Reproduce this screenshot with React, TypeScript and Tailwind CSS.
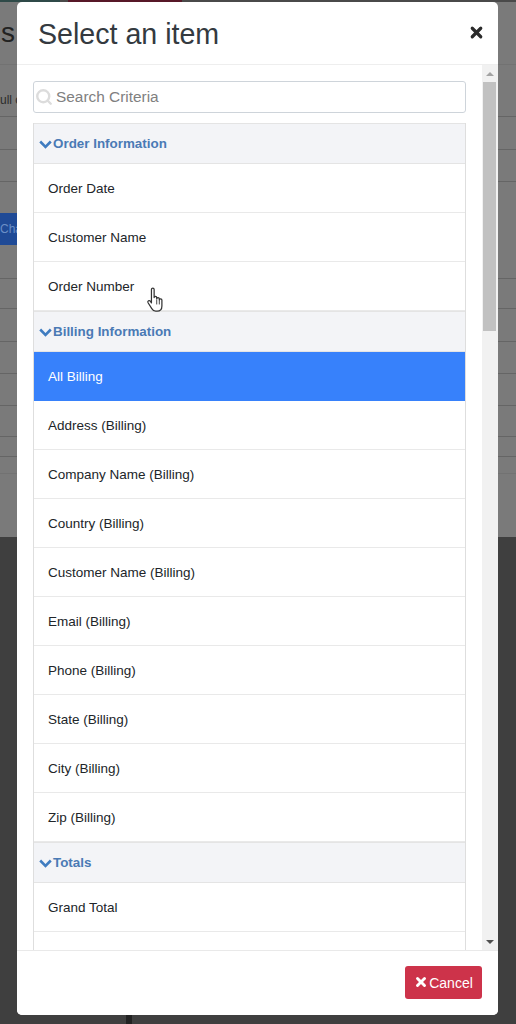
import type { ReactNode } from "react";
import { Search, X } from "lucide-react";

function Item({ label, active }: { label?: string; active?: boolean }) {
  return (
    <div
      className={
        active
          ? "h-[49px] flex items-center pl-[14px] pt-[1px] text-[13.5px] bg-[#3781fb] text-white"
          : "h-[49px] flex items-center pl-[14px] pt-[2px] text-[13.5px] text-[#212529] bg-white border-b border-[#e9e9e9]"
      }
    >
      {label}
    </div>
  );
}

function Group({ label }: { label: string }) {
  return (
    <div className="h-[41px] flex items-center pl-[5px] pt-[2px] bg-[#f3f4f7] border-y border-[#e4e4e4] text-[13.4px] font-bold text-[#4a7ab5]">
      <svg className="shrink-0 mr-px" width="13" height="9" viewBox="0 0 13 9" fill="none">
        <path d="M1.200 1.500 L6.500 6.800 L11.800 1.500" stroke="#3f7cc0" strokeWidth="2.600" />
      </svg>
      <span>{label}</span>
    </div>
  );
}

function BgRow({ h, faint, children }: { h: string; faint?: boolean; children?: ReactNode }) {
  return (
    <div
      className={
        faint
          ? `${h} border-b border-[#727272] text-[#2b2b2b] text-[12px]`
          : `${h} border-b border-[#656565] text-[#2b2b2b] text-[12px]`
      }
    >
      {children}
    </div>
  );
}

export default function App() {
  return (
    <div className="relative w-[516px] h-[1024px] overflow-hidden bg-[#3f3f3f] font-['Liberation_Sans',Arial,sans-serif] flex flex-col">
      <div className="h-[537px] shrink-0 bg-[#7a7a7a] flex flex-col">
        <div className="h-[2px] shrink-0 flex bg-[#4a4a4a]">
          <div className="w-[60px] bg-[#2f4a48]" />
          <div className="w-[8px]" />
          <div className="w-[114px] bg-[#571828]" />
        </div>
        <BgRow h="h-[63px]" faint>
          <div className="pl-px text-[28px] leading-[62px] text-[#222]">s</div>
        </BgRow>
        <BgRow h="h-[52px]">
          <div className="pt-[28px] leading-[14px] whitespace-nowrap">ull c</div>
        </BgRow>
        <BgRow h="h-[33px]" />
        <BgRow h="h-[32px]" />
        <BgRow h="h-[97px]">
          <div className="mt-[31px] h-[32px] w-[30px] bg-[#1f4a96] text-[#6b8fc6] leading-[32px] whitespace-nowrap">Cha</div>
        </BgRow>
        <BgRow h="h-[30px]" />
        <BgRow h="h-[33px]" />
        <BgRow h="h-[32px]" />
        <BgRow h="h-[32px]" />
        <BgRow h="h-[31px]" />
        <BgRow h="h-[20px]" />
        <BgRow h="h-[17px]" faint />
      </div>
      <div className="flex-1 pl-[126px]">
        <div className="w-[6px] h-full bg-[#222222]" />
      </div>

      <div className="absolute left-[17px] top-[2px] w-[481px] h-[1013px] bg-white rounded-[5px] flex flex-col overflow-hidden">
        <div className="h-[63px] shrink-0 flex items-center justify-between pl-[21px] pr-[13px] border-b border-[#eeeeee]">
          <span className="text-[28.6px] pt-[2px] text-[#343a40]">Select an item</span>
          <X className="w-[17px] h-[17px] -mt-[2px] text-[#2b2b2b]" strokeWidth={4.5} />
        </div>

        <div className="flex-1 min-h-0 flex">
          <div className="flex-1 min-w-0 pl-[16px] pr-[16px] pt-[16px] overflow-hidden">
            <div className="relative h-[32px] mb-[10px] border border-[#ced4da] rounded-[3px] flex items-center pl-[22px] text-[15.4px] text-[#808080]">
              <Search className="absolute left-[1px] top-[6px] w-[18px] h-[18px] text-[#dcdcdc]" strokeWidth={3.200} />
              Search Criteria
            </div>
            <div className="border-x border-[#dedede]">
              <Group label="Order Information" />
              <Item label="Order Date" />
              <Item label="Customer Name" />
              <div className="relative">
                <Item label="Order Number" />
                <svg className="absolute left-[112px] top-[25px]" width="21" height="27" viewBox="0 0 18 24">
                  <path
                    d="M4.500 2.200c0-1.500 2.400-1.500 2.400 0v7.200c0-1.300 2.300-1.300 2.300 0v1c0-1.200 2.300-1.200 2.300 0v1c0-1.100 2.300-1.100 2.300.2v5.200c0 2.600-1.600 4.600-4.300 4.600H8.300c-1.800 0-2.600-.7-3.500-2.200L1.500 14c-.8-1.500 1-2.600 2-1.400l1 1.500z"
                    fill="#fff"
                    stroke="#333"
                    strokeWidth="1.100"
                    strokeLinejoin="round"
                  />
                  <path d="M9.200 11v4.500M11.500 11.300v4.200" stroke="#333" strokeWidth="0.800" />
                </svg>
              </div>
              <Group label="Billing Information" />
              <Item label="All Billing" active />
              <Item label="Address (Billing)" />
              <Item label="Company Name (Billing)" />
              <Item label="Country (Billing)" />
              <Item label="Customer Name (Billing)" />
              <Item label="Email (Billing)" />
              <Item label="Phone (Billing)" />
              <Item label="State (Billing)" />
              <Item label="City (Billing)" />
              <Item label="Zip (Billing)" />
              <Group label="Totals" />
              <Item label="Grand Total" />
              <Item />
            </div>
          </div>
          <div className="w-[16px] shrink-0 bg-[#f1f1f1] flex flex-col items-start pl-px">
            <div className="h-[17px] w-[13px] flex items-center justify-center">
              <div className="w-0 h-0 border-x-[4px] border-x-transparent border-b-[4px] border-b-[#a3a3a3]" />
            </div>
            <div className="w-[13px] h-[249px] bg-[#c1c1c1]" />
            <div className="flex-1" />
            <div className="h-[16px] w-[13px] flex items-center justify-center">
              <div className="w-0 h-0 border-x-[4px] border-x-transparent border-t-[4px] border-t-[#505050]" />
            </div>
          </div>
        </div>

        <div className="h-[65px] shrink-0 border-t border-[#e9e9e9] flex items-center justify-end pr-[16px] pb-[1px] bg-white">
          <button className="h-[33px] w-[77px] pt-[1px] rounded-[3px] bg-[#cd334a] text-white text-[14px] flex items-center justify-center gap-[1px]">
            <X className="w-[14px] h-[14px] -mt-[2px]" strokeWidth={5} />
            Cancel
          </button>
        </div>
      </div>
    </div>
  );
}
